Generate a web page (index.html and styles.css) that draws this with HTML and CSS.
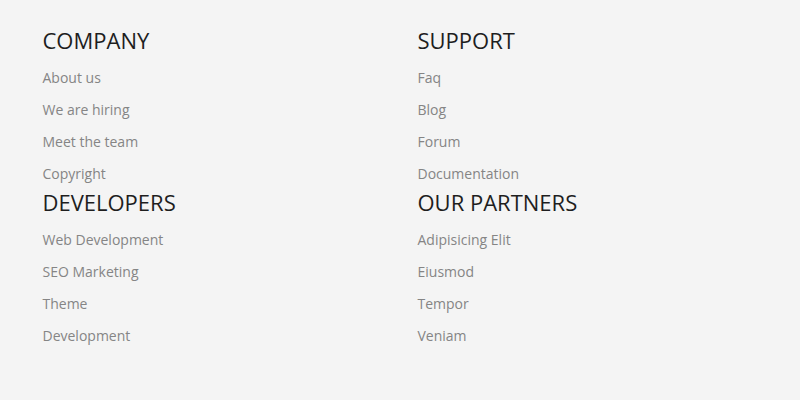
FILE: index.html
```html
<!DOCTYPE html>
<html>
<head>
<meta charset="utf-8">
<link rel="stylesheet" href="styles.css">
</head>
<body>
<div class="footer">
  <div class="col">
    <div class="section">
      <h3 class="title">COMPANY</h3>
      <ul class="links">
        <li><a href="#">About us</a></li>
        <li><a href="#">We are hiring</a></li>
        <li><a href="#">Meet the team</a></li>
        <li><a href="#">Copyright</a></li>
      </ul>
    </div>
    <div class="section">
      <h3 class="title">DEVELOPERS</h3>
      <ul class="links">
        <li><a href="#">Web Development</a></li>
        <li><a href="#">SEO Marketing</a></li>
        <li><a href="#">Theme</a></li>
        <li><a href="#">Development</a></li>
      </ul>
    </div>
  </div>
  <div class="col">
    <div class="section">
      <h3 class="title">SUPPORT</h3>
      <ul class="links">
        <li><a href="#">Faq</a></li>
        <li><a href="#">Blog</a></li>
        <li><a href="#">Forum</a></li>
        <li><a href="#">Documentation</a></li>
      </ul>
    </div>
    <div class="section">
      <h3 class="title">OUR PARTNERS</h3>
      <ul class="links">
        <li><a href="#">Adipisicing Elit</a></li>
        <li><a href="#">Eiusmod</a></li>
        <li><a href="#">Tempor</a></li>
        <li><a href="#">Veniam</a></li>
      </ul>
    </div>
  </div>
</div>
</body>
</html>
```
FILE: styles.css
```css
html, body {
  margin: 0;
  padding: 0;
  background: #f4f4f4;
  height: 100%;
}
body {
  font-family: "Open Sans", "Liberation Sans", sans-serif;
}
.footer {
  display: grid;
  grid-template-columns: 375px 375px;
  padding: 28px 0 0 42.5px;
}
.title {
  margin: 0 0 10px 0;
  font-size: 22px;
  font-weight: 400;
  line-height: 24px;
  color: #1e1e1e;
}
.links {
  list-style: none;
  margin: 0;
  padding: 0;
}
.links li {
  font-size: 14px;
  line-height: 32px;
}
.links a {
  color: #858585;
  text-decoration: none;
}
```
